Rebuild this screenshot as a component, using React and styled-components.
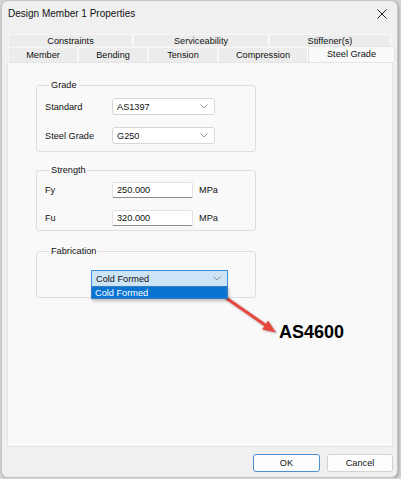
import React from 'react'
import styled, { createGlobalStyle } from 'styled-components'

const GlobalStyle = createGlobalStyle`
  html, body {
    margin: 0;
    padding: 0;
    background: #d6d6d6;
  }
  body {
    font-family: "Liberation Sans", Arial, sans-serif;
    font-size: 9.2px;
    color: #111;
  }
`

const Window = styled.div`
  position: relative;
  box-sizing: border-box;
  width: 397px;
  height: 478px;
  margin-left: 1px;
  background: #f0f0f0;
  border: 1px solid #c4c4c4;
  border-radius: 7px;
  box-shadow: 1px 1px 3px rgba(0, 0, 0, 0.25);
  display: flex;
  flex-direction: column;
`

const TitleBar = styled.div`
  height: 32px;
  display: flex;
  align-items: flex-start;
  justify-content: space-between;
  padding: 0 8px 0 6px;
`

const Title = styled.div`
  font-size: 10px;
  line-height: 26px;
  color: #111;
`

const CloseButton = styled.div`
  width: 14px;
  height: 26px;
  display: flex;
  align-items: center;
  justify-content: center;
`

const Content = styled.div`
  display: flex;
  flex-direction: column;
  padding: 0 4px 0 5px;
`

const TabStrip = styled.div`
  display: flex;
  flex-direction: column;
  margin-left: 1px;
`

const TabRow = styled.div`
  display: grid;
  grid-template-columns: ${p => p.$cols};
  height: ${p => p.$h}px;
  align-items: end;
`

const Tab = styled.div`
  box-sizing: border-box;
  height: ${p => (p.$active ? '100%' : 'calc(100% - 1px)')};
  display: flex;
  align-items: ${p => (p.$active ? 'flex-start' : 'center')};
  justify-content: center;
  background: ${p => (p.$active ? '#f9f9f9' : '#ececec')};
  border: 1px solid ${p => (p.$active ? '#e4e4e4' : '#f6f6f6')};
  border-bottom: none;
  border-right-color: ${p => (p.$active ? '#e4e4e4' : '#fbfbfb')};
  padding-top: ${p => (p.$active ? '2px' : '0')};
  color: #111;
  margin-right: ${p => (p.$active ? '-2px' : '0')};
  position: relative;
  z-index: ${p => (p.$active ? 1 : 0)};
`

const Panel = styled.div`
  box-sizing: border-box;
  width: 386px;
  height: 385px;
  background: #f9f9f9;
  border: 1px solid #e4e4e4;
  padding: 17px 0 0 28px;
  display: flex;
  flex-direction: column;
  align-items: flex-start;
`

const Group = styled.fieldset`
  box-sizing: border-box;
  width: 220px;
  margin: ${p => p.$mt || 0}px 0 0 0;
  padding: ${p => p.$pt}px 8px ${p => p.$pb}px 8px;
  border: 1px solid #dedede;
  border-radius: 3px;
  min-inline-size: auto;
`

const Legend = styled.legend`
  padding: 0 2px;
  margin-left: 4px;
  font-size: 9.2px;
  line-height: 11px;
  color: #111;
`

const FieldGrid = styled.div`
  display: grid;
  grid-template-columns: 67px ${p => p.$field}px auto;
  row-gap: 12px;
  align-items: center;
`

const Label = styled.div`
  color: #111;
`

const Select = styled.div`
  box-sizing: border-box;
  position: relative;
  width: ${p => p.$w || 103}px;
  height: 17px;
  display: flex;
  align-items: center;
  justify-content: space-between;
  padding: 0 6px 0 4px;
  background: ${p => (p.$focus ? '#cde4f7' : '#ffffff')};
  border: 1px solid ${p => (p.$focus ? '#3b8ee0' : '#d7d7d7')};
  border-radius: ${p => (p.$focus ? '0' : '3px')};
  color: #111;
`

const Input = styled.div`
  box-sizing: border-box;
  width: 81px;
  height: 16px;
  display: flex;
  align-items: center;
  padding: 0 4px;
  background: #ffffff;
  border: 1px solid #e2e2e2;
  border-bottom: 1px solid #8c8c8c;
  border-radius: 2px;
`

const Unit = styled.div`
  padding-left: 6px;
`

const DropList = styled.div`
  position: absolute;
  top: 100%;
  left: -1px;
  right: -1px;
  box-sizing: border-box;
  height: 13px;
  background: #0a74d3;
  border: 1px solid #3b7fbf;
  color: #ffffff;
  display: flex;
  align-items: center;
  padding-left: 3px;
  box-shadow: 1px 2px 3px rgba(0, 0, 0, 0.25);
  z-index: 2;
`

const FabricationRow = styled.div`
  padding-left: 46px;
`

const ButtonBar = styled.div`
  display: flex;
  justify-content: flex-end;
  gap: 7px;
  margin-top: 7px;
`

const Button = styled.div`
  box-sizing: border-box;
  width: ${p => p.$w}px;
  height: 18px;
  display: flex;
  align-items: center;
  justify-content: center;
  background: #fdfdfd;
  border: ${p => (p.$primary ? '1.5px solid #4a8fd6' : '1px solid #d2d2d2')};
  border-radius: 3px;
  color: #111;
`

const Annotation = styled.svg`
  position: absolute;
  left: 198px;
  top: 280px;
  overflow: visible;
  filter: drop-shadow(1px 1px 1px rgba(0, 0, 0, 0.3));
`

const Callout = styled.div`
  position: absolute;
  left: 277px;
  top: 322px;
  font-family: "Liberation Sans", Arial, sans-serif;
  font-weight: bold;
  font-size: 18px;
  line-height: 18px;
  color: #000;
`

const Chevron = () => (
  <svg width="8" height="5" viewBox="0 0 8 5">
    <polyline points="0.5,0.5 4,4 7.5,0.5" fill="none" stroke="#8a8a8a" strokeWidth="0.9" />
  </svg>
)

const App = () => (
  <>
    <GlobalStyle />
    <Window>
      <TitleBar>
        <Title>Design Member 1 Properties</Title>
        <CloseButton>
          <svg width="10" height="10" viewBox="0 0 10 10">
            <path d="M0.5 0.5 L9.5 9.5 M9.5 0.5 L0.5 9.5" stroke="#222" strokeWidth="1" />
          </svg>
        </CloseButton>
      </TitleBar>

      <Content>
        <TabStrip>
          <TabRow $cols="125px 136px 122px" $h={13}>
            <Tab>Constraints</Tab>
            <Tab>Serviceability</Tab>
            <Tab>Stiffener(s)</Tab>
          </TabRow>
          <TabRow $cols="70px 70px 70px 90px 85px" $h={16}>
            <Tab>Member</Tab>
            <Tab>Bending</Tab>
            <Tab>Tension</Tab>
            <Tab>Compression</Tab>
            <Tab $active>Steel Grade</Tab>
          </TabRow>
        </TabStrip>

        <Panel>
          <Group $pt={7} $pb={7}>
            <Legend>Grade</Legend>
            <FieldGrid $field={103}>
              <Label>Standard</Label>
              <Select>AS1397<Chevron /></Select>
              <span />
              <Label>Steel Grade</Label>
              <Select>G250<Chevron /></Select>
              <span />
            </FieldGrid>
          </Group>

          <Group $mt={13} $pt={6} $pb={4}>
            <Legend>Strength</Legend>
            <FieldGrid $field={81}>
              <Label>Fy</Label>
              <Input>250.000</Input>
              <Unit>MPa</Unit>
              <Label>Fu</Label>
              <Input>320.000</Input>
              <Unit>MPa</Unit>
            </FieldGrid>
          </Group>

          <Group $mt={15} $pt={13} $pb={10}>
            <Legend>Fabrication</Legend>
            <FabricationRow>
              <Select $w={137} $focus>
                Cold Formed<Chevron />
                <DropList>Cold Formed</DropList>
              </Select>
            </FabricationRow>
          </Group>
        </Panel>

        <ButtonBar>
          <Button $w={67} $primary>OK</Button>
          <Button $w={66}>Cancel</Button>
        </ButtonBar>
      </Content>

      <Annotation width="90" height="60" viewBox="0 0 90 60">
        <line x1="19" y1="12" x2="68" y2="46" stroke="#e8473f" strokeWidth="3" />
        <polygon points="76,51.5 62,48.5 68,39.5" fill="#e8473f" />
      </Annotation>
      <Callout>AS4600</Callout>
    </Window>
  </>
)

export default App
